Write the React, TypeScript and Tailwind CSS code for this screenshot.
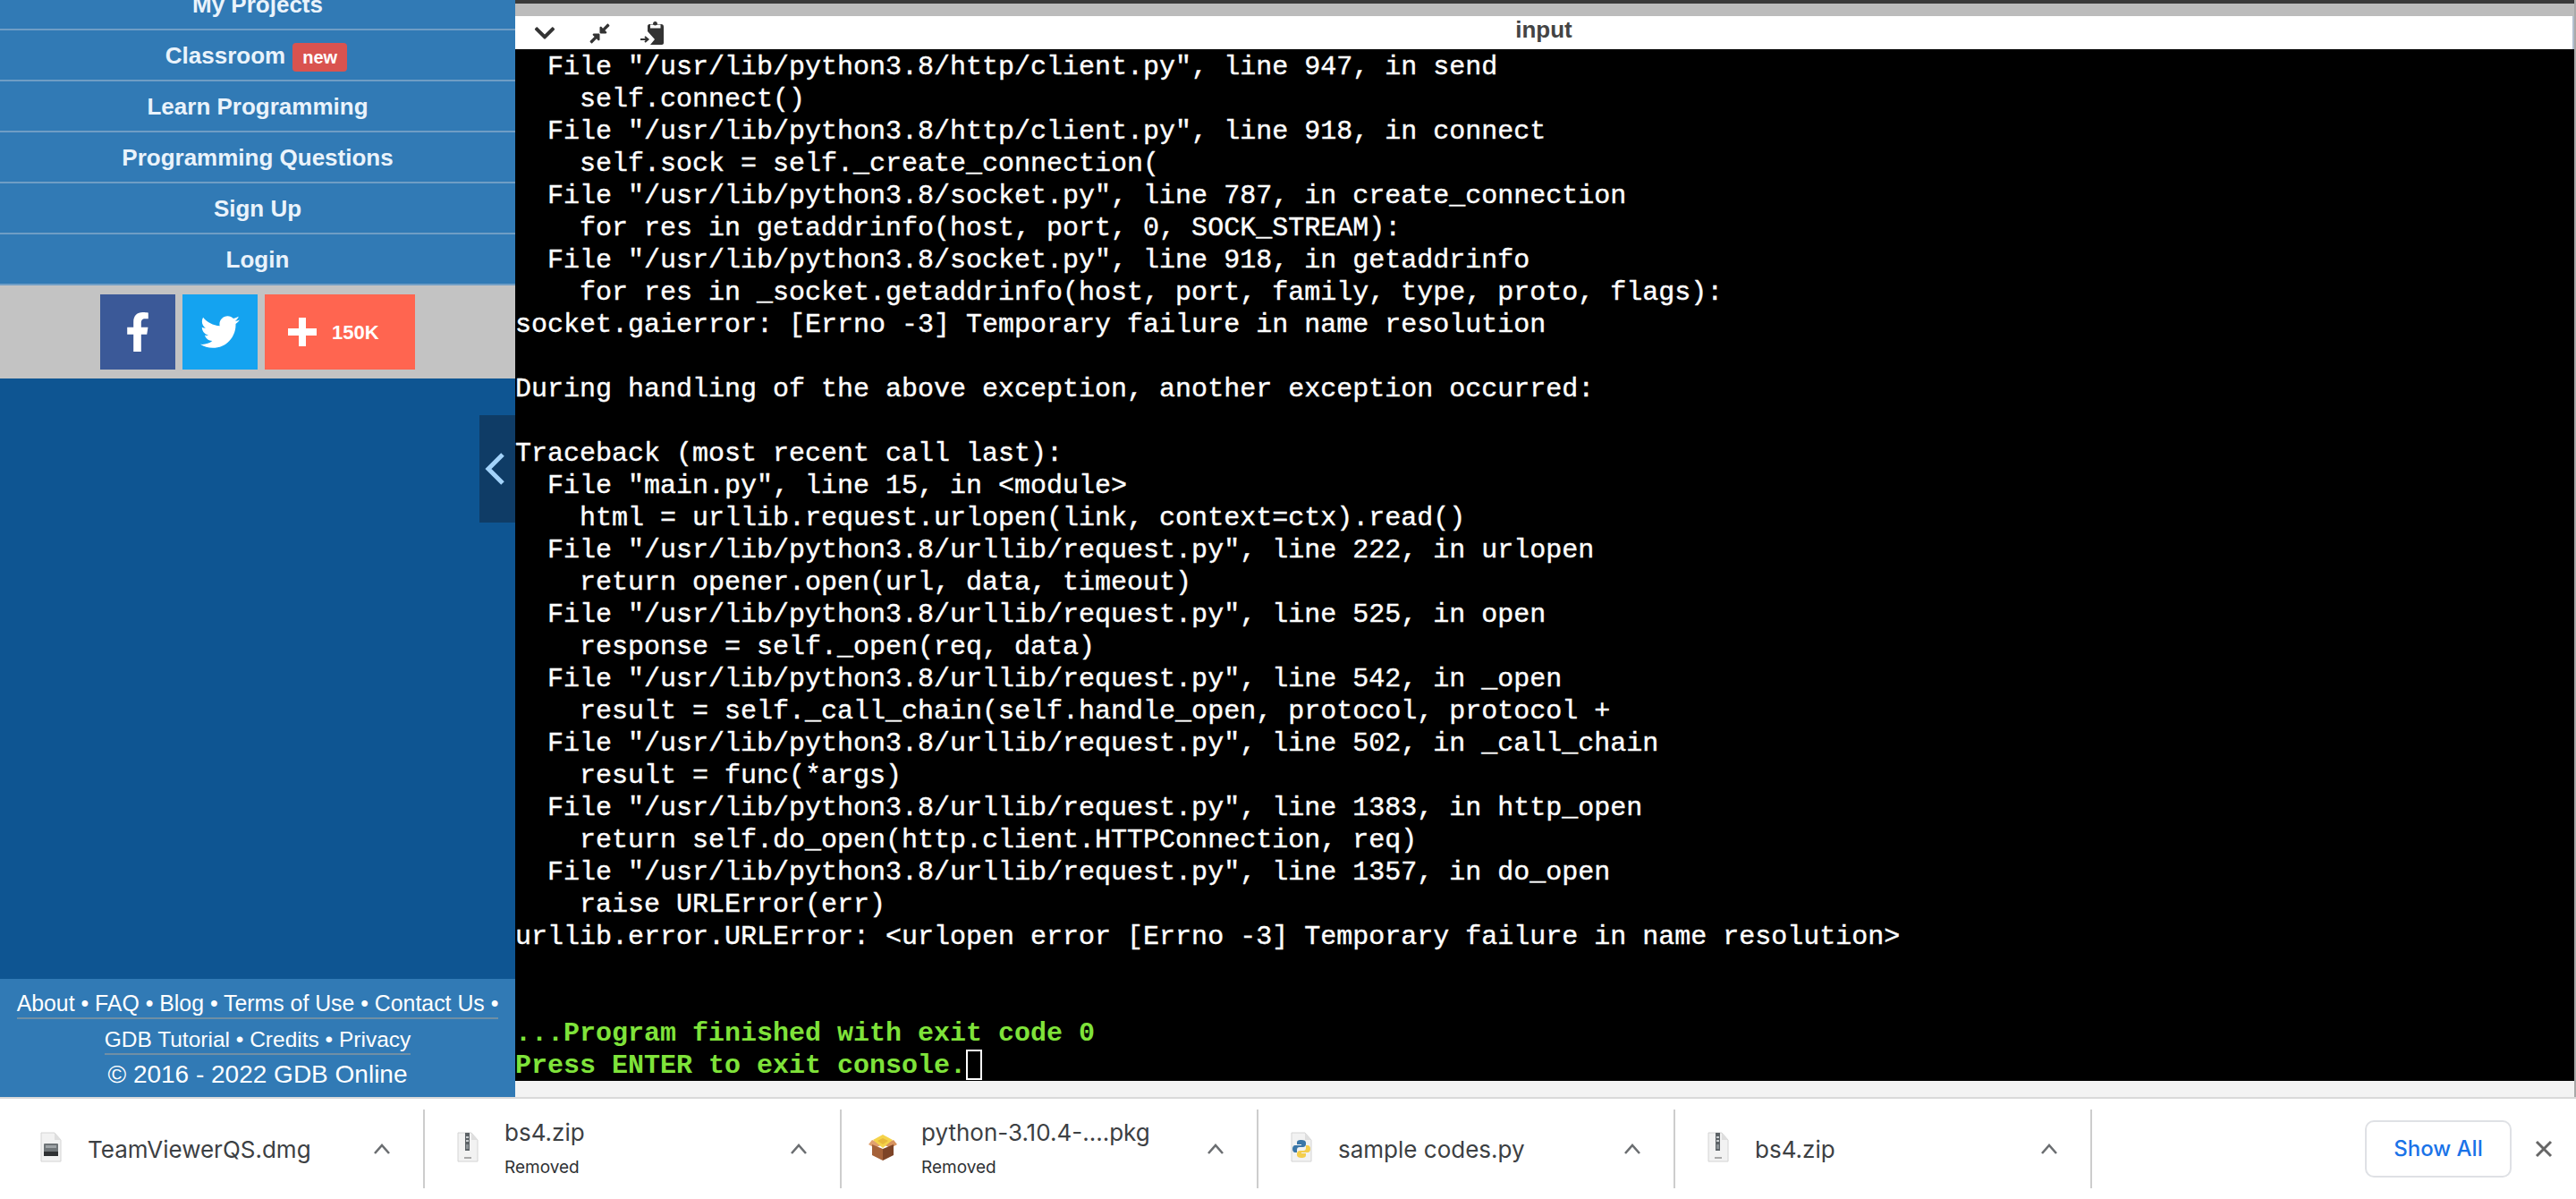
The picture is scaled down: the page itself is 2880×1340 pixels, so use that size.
import React from "react";
import { FaFacebookF, FaTwitter, FaChevronDown, FaCompressAlt } from "react-icons/fa";

const traceback = `  File "/usr/lib/python3.8/http/client.py", line 947, in send
    self.connect()
  File "/usr/lib/python3.8/http/client.py", line 918, in connect
    self.sock = self._create_connection(
  File "/usr/lib/python3.8/socket.py", line 787, in create_connection
    for res in getaddrinfo(host, port, 0, SOCK_STREAM):
  File "/usr/lib/python3.8/socket.py", line 918, in getaddrinfo
    for res in _socket.getaddrinfo(host, port, family, type, proto, flags):
socket.gaierror: [Errno -3] Temporary failure in name resolution

During handling of the above exception, another exception occurred:

Traceback (most recent call last):
  File "main.py", line 15, in <module>
    html = urllib.request.urlopen(link, context=ctx).read()
  File "/usr/lib/python3.8/urllib/request.py", line 222, in urlopen
    return opener.open(url, data, timeout)
  File "/usr/lib/python3.8/urllib/request.py", line 525, in open
    response = self._open(req, data)
  File "/usr/lib/python3.8/urllib/request.py", line 542, in _open
    result = self._call_chain(self.handle_open, protocol, protocol +
  File "/usr/lib/python3.8/urllib/request.py", line 502, in _call_chain
    result = func(*args)
  File "/usr/lib/python3.8/urllib/request.py", line 1383, in http_open
    return self.do_open(http.client.HTTPConnection, req)
  File "/usr/lib/python3.8/urllib/request.py", line 1357, in do_open
    raise URLError(err)
urllib.error.URLError: <urlopen error [Errno -3] Temporary failure in name resolution>

`;

function NavRow({ children, first }: { children: React.ReactNode; first?: boolean }) {
  return (
    <div
      className={`h-[57px] shrink-0 flex items-center justify-center gap-[8px] pt-[1px] bg-[#317ab5] border-b-2 border-[#6f9dc5] text-[26px] font-bold text-[#eaf3fb] ${first ? "-mt-[23px]" : ""}`}
    >
      {children}
    </div>
  );
}

function PageIcon({ kind }: { kind: "dmg" | "zip" | "py" }) {
  return (
    <svg width="26" height="34" viewBox="0 0 26 34">
      <path d="M2 1h15l7 8v24H2z" fill="#f2f2f2" stroke="#d4d4d4" strokeWidth="1" />
      <path d="M17 1v8h7z" fill="#dedede" />
      {kind === "dmg" && (
        <>
          <rect x="5" y="13" width="16" height="14" rx="1" fill="#6f7477" />
          <rect x="5" y="22" width="16" height="5" fill="#2f3133" />
          <rect x="7" y="15" width="12" height="3" fill="#9fa4a7" />
        </>
      )}
      {kind === "zip" && (
        <>
          <rect x="10" y="1" width="5" height="20" fill="#5c6266" />
          <rect x="11" y="5" width="3" height="2" fill="#c9cdd0" />
          <rect x="11" y="9" width="3" height="2" fill="#c9cdd0" />
          <rect x="11" y="14" width="3" height="5" fill="#8b9195" />
          <rect x="9" y="28" width="8" height="2" fill="#a9a9a9" />
        </>
      )}
      {kind === "py" && (
        <>
          <path d="M13 9c-4 0-5 1-5 3v2h5v1H6c-2 0-3 2-3 4s1 4 3 4h2v-3c0-2 1-3 3-3h4c1 0 3-1 3-3v-2c0-2-2-3-5-3z" fill="#3a76a8" />
          <path d="M13 29c4 0 5-1 5-3v-2h-5v-1h7c2 0 3-2 3-4s-1-4-3-4h-2v3c0 2-1 3-3 3h-4c-1 0-3 1-3 3v2c0 2 2 3 5 3z" fill="#f4ce4c" />
        </>
      )}
    </svg>
  );
}

function BoxIcon() {
  return (
    <svg width="36" height="30" viewBox="0 0 36 30">
      <path d="M18 12 6 7 2 12l7 4z" fill="#e0a070" />
      <path d="M18 12l12-5 4 5-7 4z" fill="#d8935f" />
      <path d="M6 12l12 5v13L6 24z" fill="#a5623a" />
      <path d="M30 12l-12 5v13l12-6z" fill="#7d4427" />
      <path d="M18 1 29 7 18 16 7 7z" fill="#f5d34a" />
      <path d="M18 5l6 3-6 4-6-4z" fill="#e8b93a" />
    </svg>
  );
}

function Chevron() {
  return (
    <svg width="20" height="14" viewBox="0 0 20 14" className="ml-auto mr-[36px] shrink-0">
      <path d="M2 12 10 3l8 9" fill="none" stroke="#6b6e71" strokeWidth="2.6" />
    </svg>
  );
}

function Download({ icon, name, removed }: { icon: React.ReactNode; name: string; removed?: boolean }) {
  return (
    <>
      <div className="w-[464px] h-full shrink-0 flex items-center pl-[35px]">
        <div className="w-[54px] shrink-0 flex items-center -mt-[4px]">{icon}</div>
        {removed ? (
          <div className="flex flex-col font-['Inter',sans-serif]">
            <span className="text-[26px] leading-[34px] text-[#3c4043]">{name}</span>
            <span className="text-[19px] leading-[28px] mt-[8px] text-[#2f3235]">Removed</span>
          </div>
        ) : (
          <span className="font-['Inter',sans-serif] text-[26px] text-[#3c4043]">{name}</span>
        )}
        <Chevron />
      </div>
      <div className="w-[2px] h-[88px] shrink-0 bg-[#cdcdcd]" />
    </>
  );
}

export default function App() {
  return (
    <div className="relative w-[2880px] h-[1340px] overflow-hidden flex flex-col bg-white font-['Liberation_Sans',Arial,sans-serif]">
      <div className="flex h-[1226px] shrink-0">
        <aside className="relative w-[576px] shrink-0 flex flex-col bg-[#0e5592]">
          <div className="flex flex-col overflow-hidden">
            <NavRow first>My Projects</NavRow>
            <NavRow>
              <span className="-ml-[3px]">Classroom</span>
              <span className="w-[61px] h-[32px] rounded-[4px] bg-[#d9534f] text-white text-[20px] flex items-center justify-center mt-[3px]">new</span>
            </NavRow>
            <NavRow>Learn Programming</NavRow>
            <NavRow>Programming Questions</NavRow>
            <NavRow>Sign Up</NavRow>
            <NavRow>Login</NavRow>
          </div>
          <div className="h-[104px] shrink-0 bg-[#c3c3c3] flex items-center justify-center gap-[8px]">
            <div className="w-[84px] h-[84px] bg-[#3b5998] flex items-center justify-center text-white">
              <FaFacebookF size={44} />
            </div>
            <div className="w-[84px] h-[84px] bg-[#14a3f0] flex items-center justify-center text-white">
              <FaTwitter size={44} />
            </div>
            <div className="w-[168px] h-[84px] bg-[#ff6550] flex items-center pl-[26px] gap-[17px] text-white">
              <svg width="32" height="32" viewBox="0 0 32 32">
                <path d="M12 0h8v12h12v8H20v12h-8V20H0v-8h12z" fill="#fff" />
              </svg>
              <span className="text-[22px] font-bold">150K</span>
            </div>
          </div>
          <div className="flex-1" />
          <footer className="h-[132px] shrink-0 bg-[#317ab5] text-white flex flex-col items-center pt-[13px]">
            <div className="text-[24.85px] leading-[30px] border-b-2 border-[#6f8fa5] whitespace-pre">About • FAQ • Blog • Terms of Use • Contact Us •</div>
            <div className="text-[24.5px] leading-[30px] border-b-2 border-[#6f8fa5] mt-[8px] whitespace-pre">GDB Tutorial • Credits • Privacy</div>
            <div className="text-[28px] leading-[36px] mt-[4px]">© 2016 - 2022 GDB Online</div>
          </footer>
          <div className="absolute right-0 top-[464px] w-[40px] h-[120px] bg-[#0f3c66] flex items-center justify-center">
            <svg width="24" height="36" viewBox="0 0 24 36" className="-ml-[6px]">
              <path d="M21 2 5 18l16 16" fill="none" stroke="#a3d3fa" strokeWidth="5" />
            </svg>
          </div>
        </aside>
        <main className="flex-1 min-w-0 flex flex-col border-r-2 border-[#a9a9a9]">
          <div className="h-[4px] shrink-0 bg-[#3a3a3a]" />
          <div className="h-[14px] shrink-0 bg-[#bcbcbc]" />
          <div className="h-[37px] shrink-0 bg-white grid grid-cols-3 items-center border-r-2 border-[#b3bfcf] text-[#333]">
            <div className="flex items-center pl-[20px] pb-[2px]">
              <FaChevronDown size={26} />
              <FaCompressAlt size={25} className="ml-[36px]" />
              <svg width="26" height="26" viewBox="0 0 26 26" className="ml-[33px]">
                <path d="M8 5c0-1 1-2 2-2h4c0-2 1-3 2.500-3S19 1 19 3h4c2 0 3 1 3 3v18c0 1-1 2-2 2H11l5-6-8-9z" fill="#333" />
                <path d="M11 3.500h3c.500 0 1 1 2.500 1s2-1 2.500-1h3.500v4H11z" fill="#fff" />
                <path d="M0 20h7M5 17l3.500 3L5 23" fill="none" stroke="#333" strokeWidth="2" />
              </svg>
            </div>
            <div className="text-center text-[26px] leading-[30px] font-bold text-[#444] pb-[10px]">input</div>
            <div />
          </div>
          <div className="flex-1 min-h-0 bg-black pt-[2px] overflow-hidden font-['Liberation_Mono',monospace] text-[30px] leading-[36px] text-white [-webkit-text-stroke:0.4px]">
            <pre className="font-['Liberation_Mono',monospace] whitespace-pre">{traceback}</pre>
            <pre className="font-['Liberation_Mono',monospace] whitespace-pre font-bold text-[#7fe33a] [-webkit-text-stroke:0px]">
              {"\n...Program finished with exit code 0\nPress ENTER to exit console."}
              <span className="inline-block w-[18px] h-[34px] border-2 border-white align-[-8px]" />
            </pre>
          </div>
          <div className="h-[18px] shrink-0 bg-[#f3f3f3]" />
        </main>
      </div>
      <div className="h-[114px] shrink-0 border-t-2 border-[#d9d9d9] bg-white flex items-center pl-[9px] relative">
        <Download icon={<PageIcon kind="dmg" />} name="TeamViewerQS.dmg" />
        <Download icon={<PageIcon kind="zip" />} name="bs4.zip" removed />
        <Download icon={<div className="-ml-[7px]"><BoxIcon /></div>} name="python-3.10.4-....pkg" removed />
        <Download icon={<PageIcon kind="py" />} name="sample codes.py" />
        <Download icon={<PageIcon kind="zip" />} name="bs4.zip" />
        <div className="ml-auto flex items-center mr-[26px]">
          <div className="w-[164px] h-[64px] border-2 border-[#dfe1e5] rounded-[10px] flex items-center justify-center font-['Inter',sans-serif] text-[24px] font-medium text-[#1a73e8]">Show All</div>
          <svg width="20" height="20" viewBox="0 0 20 20" className="ml-[26px]">
            <path d="M2 2l16 16M18 2 2 18" stroke="#666" strokeWidth="3" fill="none" />
          </svg>
        </div>
      </div>
    </div>
  );
}
